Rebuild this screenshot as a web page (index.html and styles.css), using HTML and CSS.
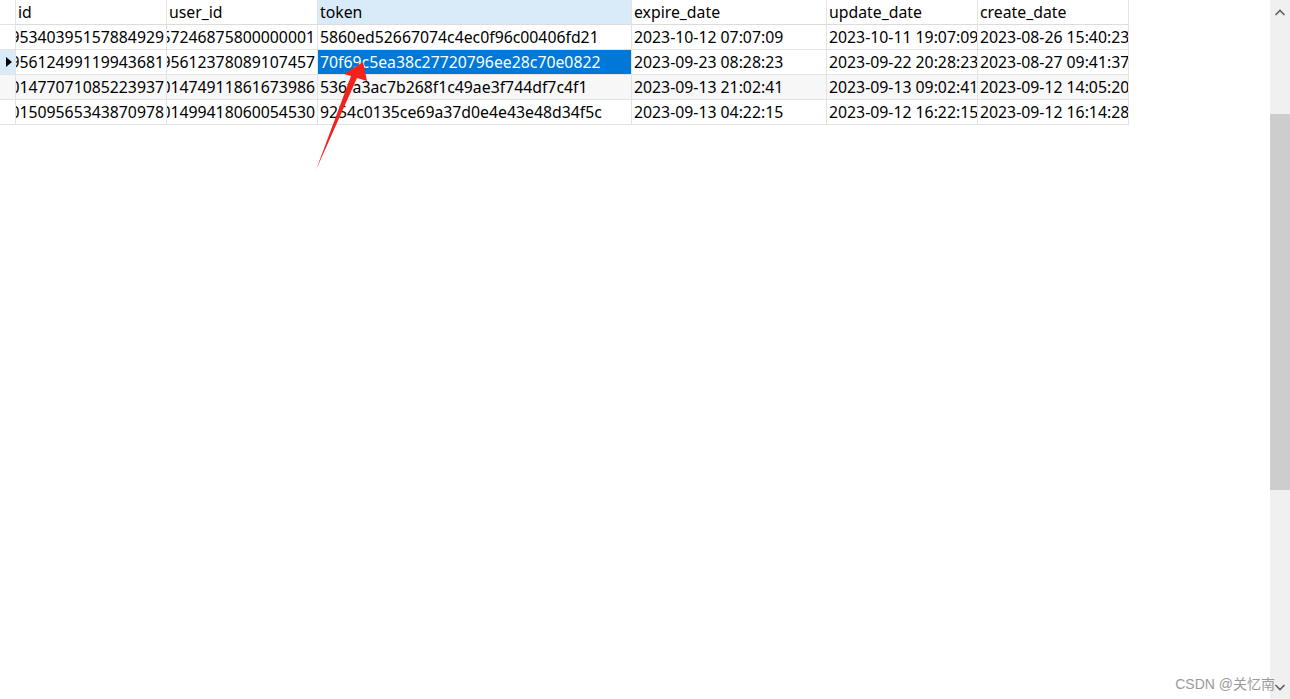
FILE: index.html
```html
<!DOCTYPE html>
<html>
<head>
<meta charset="utf-8">
<link rel="stylesheet" href="styles.css">
</head>
<body>
<div class="app">
  <div class="content">
    <div class="grid">
      <div class="cell rh"></div>
      <div class="cell hd">id</div>
      <div class="cell hd">user_id</div>
      <div class="cell hd sel-col">token</div>
      <div class="cell hd">expire_date</div>
      <div class="cell hd">update_date</div>
      <div class="cell hd">create_date</div>

      <div class="cell rh"></div>
      <div class="cell num"><span>1695340395157884929</span></div>
      <div class="cell num"><span>1657246875800000001</span></div>
      <div class="cell">5860ed52667074c4ec0f96c00406fd21</div>
      <div class="cell">2023-10-12 07:07:09</div>
      <div class="cell">2023-10-11 19:07:09</div>
      <div class="cell">2023-08-26 15:40:23</div>

      <div class="cell rh cur"><span class="tri"></span></div>
      <div class="cell num"><span>1695612499119943681</span></div>
      <div class="cell num"><span>1695612378089107457</span></div>
      <div class="cell selected">70f69c5ea38c27720796ee28c70e0822</div>
      <div class="cell">2023-09-23 08:28:23</div>
      <div class="cell">2023-09-22 20:28:23</div>
      <div class="cell">2023-08-27 09:41:37</div>

      <div class="cell rh alt"></div>
      <div class="cell num alt"><span>1701477071085223937</span></div>
      <div class="cell num alt"><span>1701474911861673986</span></div>
      <div class="cell alt">536fa3ac7b268f1c49ae3f744df7c4f1</div>
      <div class="cell alt">2023-09-13 21:02:41</div>
      <div class="cell alt">2023-09-13 09:02:41</div>
      <div class="cell alt">2023-09-12 14:05:20</div>

      <div class="cell rh"></div>
      <div class="cell num"><span>1701509565343870978</span></div>
      <div class="cell num"><span>1701499418060054530</span></div>
      <div class="cell">9254c0135ce69a37d0e4e43e48d34f5c</div>
      <div class="cell">2023-09-13 04:22:15</div>
      <div class="cell">2023-09-12 16:22:15</div>
      <div class="cell">2023-09-12 16:14:28</div>
    </div>
  </div>
  <div class="scrollbar">
    <svg class="arrow-btn" width="20" height="24" viewBox="0 0 20 24"><path d="M5.5 15 L10 10.5 L14.5 15" fill="none" stroke="#606060" stroke-width="1.6"/></svg>
    <div class="track"><div class="thumb"></div></div>
    <svg class="arrow-btn" width="20" height="24" viewBox="0 0 20 24"><path d="M5.5 10 L10 14.5 L14.5 10" fill="none" stroke="#606060" stroke-width="1.6"/></svg>
  </div>
  <svg class="annot" width="1290" height="699" viewBox="0 0 1290 699">
    <polygon points="363,62 367,81 357,78 316,170 351,76 344,74" fill="#f2221c"/>
  </svg>
  <div class="watermark">CSDN @关忆南</div>
</div>
</body>
</html>
```

FILE: styles.css
```css
html, body {
  margin: 0;
  padding: 0;
  background: #ffffff;
}
.app {
  position: relative;
  width: 1290px;
  height: 699px;
  display: flex;
  overflow: hidden;
  font-family: "Noto Sans", "Noto Sans CJK SC", sans-serif;
}
.content {
  flex: 1;
  background: #ffffff;
}
.grid {
  display: grid;
  grid-template-columns: 16px 151px 151px 314px 195px 151px 151px;
  grid-auto-rows: 25px;
  width: max-content;
}
.cell {
  box-sizing: border-box;
  border-right: 1px solid #e3e3e3;
  border-bottom: 1px solid #e3e3e3;
  font-size: 15.8px;
  line-height: 24px;
  color: #000000;
  padding-left: 2px;
  white-space: nowrap;
  overflow: hidden;
  background: #ffffff;
}
.hd {
  border-bottom: 1px solid #dcdcdc;
}
.sel-col {
  background: #d9ebf9;
}
.rh {
  padding: 0;
  position: relative;
}
.rh.cur {
  background: #d9ebf9;
}
.tri {
  position: absolute;
  left: 6px;
  top: 7px;
  width: 0;
  height: 0;
  border-top: 5px solid transparent;
  border-bottom: 5px solid transparent;
  border-left: 6px solid #000000;
}
.num {
  direction: rtl;
  padding-left: 0;
  padding-right: 2px;
}
.num span {
  direction: ltr;
  unicode-bidi: isolate;
}
.alt {
  background: #f7f7f7;
}
.selected {
  background: #0078d7;
  color: #ffffff;
}
.scrollbar {
  width: 20px;
  background: #f0f0f0;
  display: flex;
  flex-direction: column;
}
.arrow-btn {
  display: block;
  flex: none;
}
.track {
  flex: 1;
  padding-top: 90px;
  padding-bottom: 185px;
  display: flex;
}
.thumb {
  flex: 1;
  width: 19px;
  background: #cdcdcd;
}
.annot {
  position: absolute;
  left: 0;
  top: 0;
  pointer-events: none;
}
.watermark {
  position: absolute;
  right: 15px;
  bottom: 6px;
  font-size: 14px;
  color: #9a9a9a;
  font-family: "Liberation Sans", "Noto Sans CJK SC", sans-serif;
}
```
